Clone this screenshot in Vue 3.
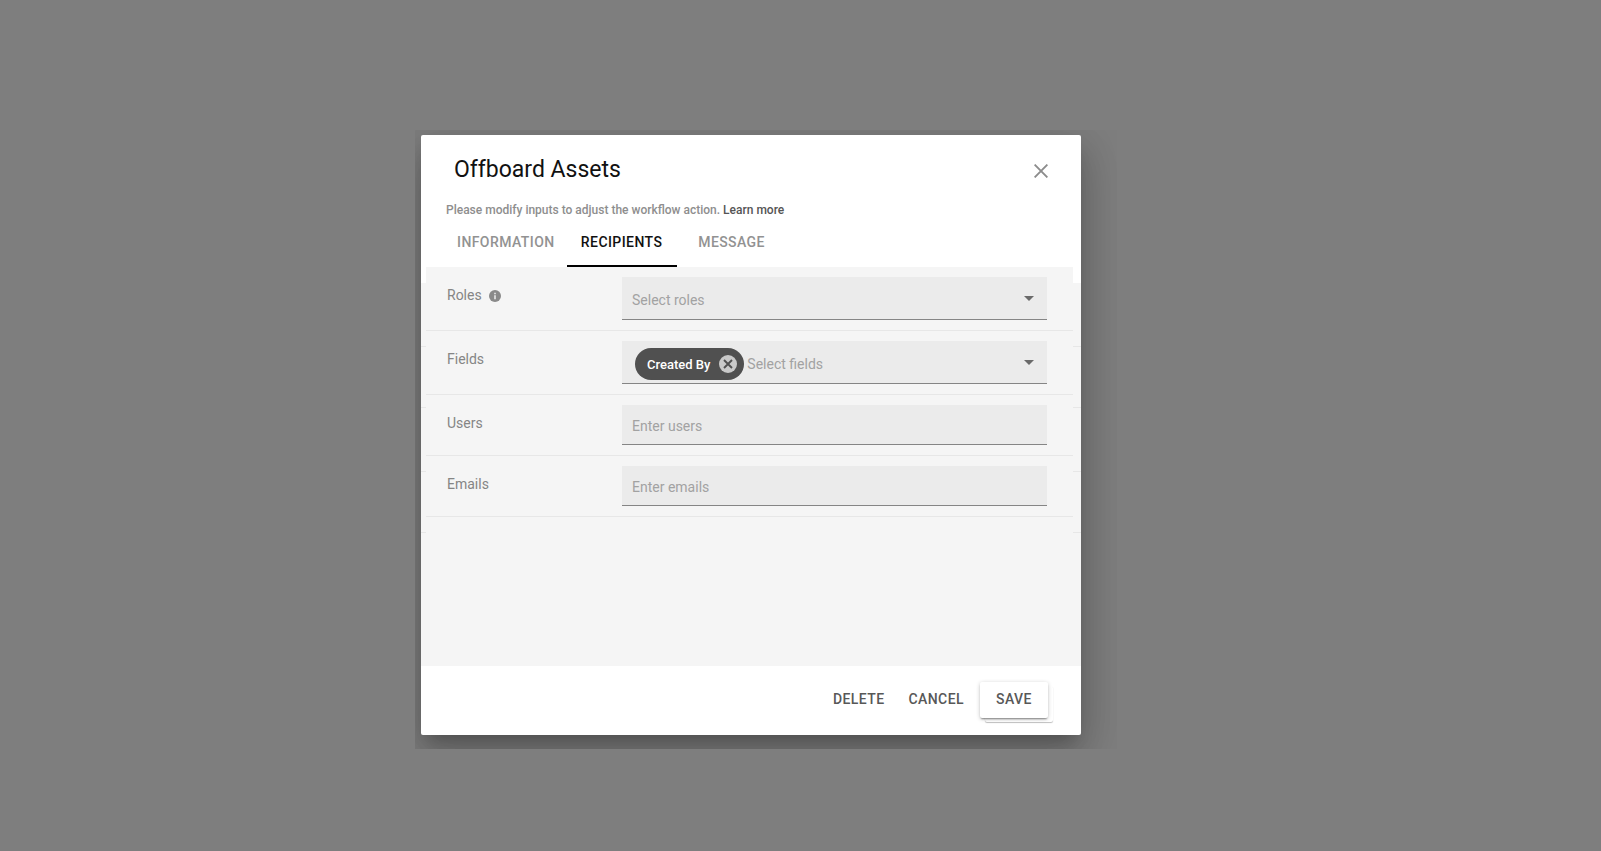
<script setup>
import { ref } from 'vue'

const tabs = ['Information', 'Recipients', 'Message']
const activeTab = ref('Recipients')
const chips = ref(['Created By'])
const role = ref('')
const field = ref('')
const users = ref('')
const emails = ref('')
</script>

<template>
  <div class="overlay">
    <section class="dialog" role="dialog" aria-labelledby="dialog-title">
      <div class="shadow"></div>
      <div class="surface">
        <header class="header">
          <h1 id="dialog-title">Offboard Assets</h1>
          <button class="close" type="button" aria-label="Close">
            <svg viewBox="0 0 14 14" width="14" height="14">
              <path d="M0.6 0.6 13.4 13.4M13.4 0.6 0.6 13.4" stroke="#8c8c8c" stroke-width="1.9" fill="none" />
            </svg>
          </button>
        </header>
        <p class="hint">Please modify inputs to adjust the workflow action. <a href="#">Learn more</a></p>

        <nav class="tabs" role="tablist">
          <button
            v-for="tab in tabs"
            :key="tab"
            type="button"
            role="tab"
            class="tab"
            :class="{ active: tab === activeTab }"
            :aria-selected="tab === activeTab"
            @click="activeTab = tab"
          >{{ tab }}</button>
        </nav>

        <form class="panel" @submit.prevent>
          <div class="row">
            <div class="caption">
              <label for="roles">Roles</label>
              <svg class="info" viewBox="0 0 12 12" width="12" height="12">
                <circle cx="6" cy="6" r="6" fill="#8a8a8a" />
                <path d="M5.3 2.8h1.4v1.4H5.3zM5.3 5.2h1.4v4H5.3z" fill="#f5f5f5" />
              </svg>
            </div>
            <div class="field picker">
              <select id="roles" v-model="role">
                <option value="">Select roles</option>
              </select>
              <svg class="arrow" viewBox="0 0 10 5" width="10" height="5"><path d="M0 0h10L5 5z" fill="#6a6a6a" /></svg>
            </div>
          </div>
          <div class="row">
            <div class="caption"><label for="fields">Fields</label></div>
            <div class="field picker">
              <span v-for="chip in chips" :key="chip" class="chip">
                {{ chip }}
                <button type="button" class="remove" aria-label="Remove Created By" @click="chips = []">
                  <svg viewBox="0 0 18 18" width="18" height="18">
                    <circle cx="9" cy="9" r="9" fill="#c9c9c9" />
                    <path d="M5 5 13 13M13 5 5 13" stroke="#505050" stroke-width="1.9" fill="none" />
                  </svg>
                </button>
              </span>
              <select id="fields" v-model="field">
                <option value="">Select fields</option>
              </select>
              <svg class="arrow" viewBox="0 0 10 5" width="10" height="5"><path d="M0 0h10L5 5z" fill="#6a6a6a" /></svg>
            </div>
          </div>
          <div class="row">
            <div class="caption"><label for="users">Users</label></div>
            <div class="field"><input id="users" v-model="users" type="text" placeholder="Enter users" /></div>
          </div>
          <div class="row">
            <div class="caption"><label for="emails">Emails</label></div>
            <div class="field"><input id="emails" v-model="emails" type="text" placeholder="Enter emails" /></div>
          </div>
        </form>

        <footer class="actions">
          <button type="button">Delete</button>
          <button type="button">Cancel</button>
          <button type="button" class="save">Save</button>
        </footer>
      </div>
    </section>
  </div>
</template>

<style>
body {
  background: #7e7e7e;
}
</style>

<style scoped>
* {
  box-sizing: border-box;
}

.overlay {
  display: flex;
  align-items: center;
  justify-content: center;
  min-height: 100vh;
  padding: 19px 99px 0 0;
  font-family: Roboto, "Liberation Sans", sans-serif;
  font-size: 14px;
}

button,
input,
select {
  margin: 0;
  padding: 0;
  border: 0;
  background: none;
  font: inherit;
  color: inherit;
}

button {
  cursor: pointer;
}

svg {
  display: block;
  flex: none;
}

.dialog {
  position: relative;
  width: 660px;
  max-width: 100%;
}

.shadow {
  position: absolute;
  inset: 0;
  border-radius: 2px;
  box-shadow:
    0 11px 15px -7px rgba(0, 0, 0, 0.2),
    0 24px 38px 3px rgba(0, 0, 0, 0.14),
    0 9px 46px 8px rgba(0, 0, 0, 0.12);
  clip-path: inset(-5px -36px -14px -6px);
}

.surface {
  position: relative;
  overflow: hidden;
  border-radius: 2px;
  background: #fff;
}

.header {
  display: flex;
  align-items: center;
  justify-content: space-between;
  padding: 19px 28px 0 33px;
}

h1 {
  margin: 0;
  font-size: 23px;
  font-weight: 400;
  line-height: 32px;
  color: #111;
}

.close {
  display: grid;
  place-items: center;
  width: 24px;
  height: 32px;
  padding-top: 2px;
}

.hint {
  margin: 15px 25px 0;
  font-size: 12px;
  font-weight: 500;
  line-height: 18px;
  color: #8e8e8e;
}

.hint a {
  color: #555;
  text-decoration: none;
}

.tabs {
  display: flex;
  padding-left: 24px;
}

.tab {
  min-width: 110px;
  height: 48px;
  padding: 0 12px;
  border-bottom: 2px solid transparent;
  font-weight: 500;
  text-transform: uppercase;
  letter-spacing: 0.03em;
  color: #929292;
}

.tab.active {
  border-bottom-color: #000;
  color: #111;
}

.panel {
  min-height: 399px;
  padding: 0 8px 0 5px;
  background:
    linear-gradient(#fff, #fff) 0 0 / 5px 16px no-repeat,
    linear-gradient(#fff, #fff) 100% 0 / 8px 16px no-repeat,
    linear-gradient(#f5f5f5, #f5f5f5) 5px 0 / calc(100% - 13px) 100% no-repeat,
    linear-gradient(#e7e7e7, #e7e7e7) 0 79px / 100% 1px no-repeat,
    linear-gradient(#e7e7e7, #e7e7e7) 0 140px / 100% 1px no-repeat,
    linear-gradient(#e7e7e7, #e7e7e7) 0 204px / 100% 1px no-repeat,
    linear-gradient(#e7e7e7, #e7e7e7) 0 265px / 100% 1px no-repeat,
    #f5f5f5;
}

.row {
  display: flex;
  align-items: flex-start;
  padding: 10px 26px 10px 21px;
  border-bottom: 1px solid #e7e7e7;
}

.caption {
  display: flex;
  align-items: center;
  gap: 7px;
  flex: none;
  width: 175px;
  padding-top: 8px;
  line-height: 20px;
  color: #858585;
}

.info {
  margin-top: 2px;
}

.field {
  display: flex;
  flex: 1;
  min-width: 0;
  height: 40px;
  padding: 2px 10px 0;
  border-bottom: 1px solid #858585;
  background: #ebebeb;
}

.picker {
  position: relative;
  align-items: center;
  height: 43px;
  padding-top: 4px;
}

.field input,
.field select {
  flex: 1;
  min-width: 0;
  appearance: none;
  outline: none;
  color: #a2a2a2;
}

.field input::placeholder {
  color: #a2a2a2;
  opacity: 1;
}

.arrow {
  position: absolute;
  right: 13px;
  top: 19px;
  pointer-events: none;
}

.chip {
  display: flex;
  align-items: center;
  gap: 9px;
  height: 32px;
  margin: 0 3px;
  padding: 0 7px 0 12px;
  border-radius: 16px;
  background: #505050;
  font-size: 13px;
  font-weight: 500;
  color: #fff;
}

.actions {
  display: flex;
  justify-content: flex-end;
  gap: 8px;
  padding: 16px 33px 17px;
}

.actions button {
  height: 36px;
  padding: 0 8px 2px;
  border-radius: 2px;
  font-weight: 500;
  text-transform: uppercase;
  letter-spacing: 0.03em;
  color: #585858;
}

.actions .save {
  min-width: 68px;
  padding: 0 16px 2px;
  background: #fff;
  box-shadow:
    0 2px 2px -1px rgba(0, 0, 0, 0.4),
    0 1px 4px rgba(0, 0, 0, 0.22),
    5px 4px 0 0 #fff,
    5px 5px 1px 0 rgba(0, 0, 0, 0.25);
}
</style>
